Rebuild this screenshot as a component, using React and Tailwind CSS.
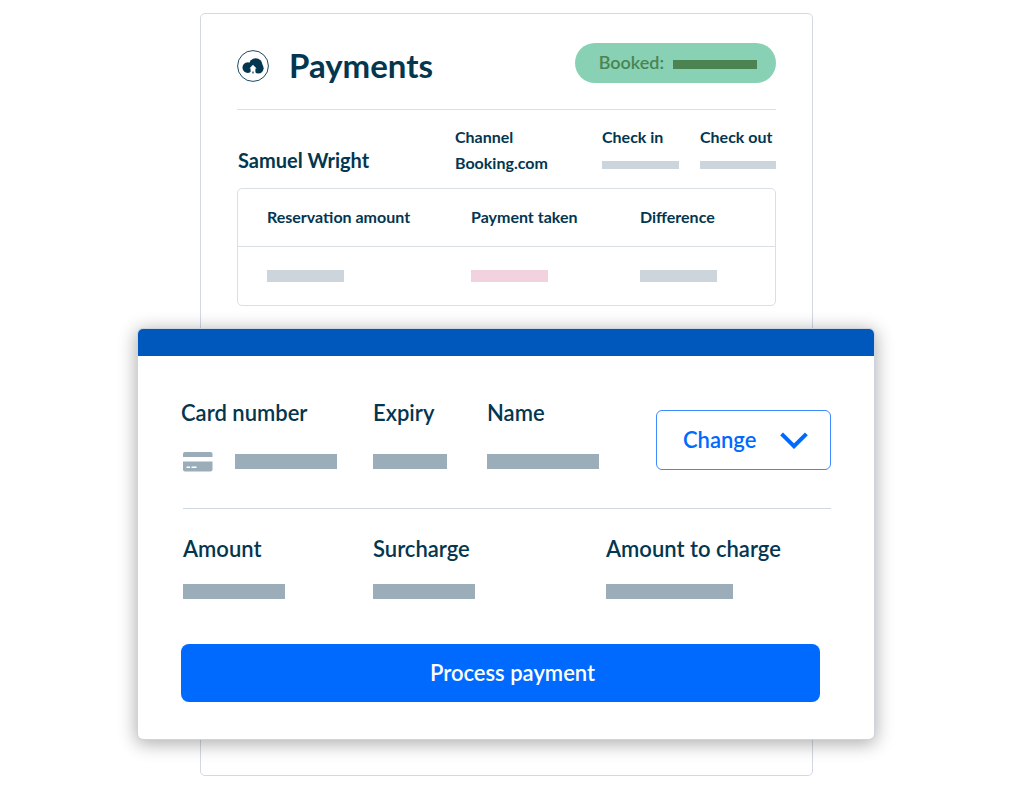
const Bar = ({ className }) => <span aria-hidden="true" className={`block ${className}`} />;

const detalle = [
  { label: 'Reservation amount', color: 'bg-[#ccd5db]' },
  { label: 'Payment taken', color: 'bg-[#f2d2de]' },
  { label: 'Difference', color: 'bg-[#ccd5db]' },
];

const tarjeta = [
  { label: 'Card number', width: 'w-[102px]', icon: true },
  { label: 'Expiry', width: 'w-[74px]' },
  { label: 'Name', width: 'w-[112px]' },
];

const cargos = [
  { label: 'Amount', width: 'w-[102px]' },
  { label: 'Surcharge', width: 'w-[102px]' },
  { label: 'Amount to charge', width: 'w-[127px]' },
];

const Logo = () => (
  <svg viewBox="0 0 32 32" className="size-8 shrink-0" aria-hidden="true">
    <circle cx="16" cy="16" r="15.4" fill="#fff" stroke="#03364f" strokeWidth="0.9" />
    <g fill="#03364f">
      <circle cx="10.8" cy="17.6" r="5.3" />
      <circle cx="18.7" cy="15" r="6.8" />
      <circle cx="21.4" cy="18.2" r="5.2" />
    </g>
    <path d="M16 14.8l3.6 3.8h-1.2V24h-4.8v-5.4h-1.2z" fill="#fff" />
    <path d="M15.4 21.6h1.2v1.8h-1.2z" fill="#03364f" />
  </svg>
);

const CardIcon = () => (
  <svg viewBox="0 0 30 20" className="w-[30px] h-5 shrink-0" aria-hidden="true">
    <path d="M2 0h25.500a2 2 0 0 1 2 2v3H0V2a2 2 0 0 1 2-2z" fill="#9aadb8" />
    <path d="M0 9.500h29.500V17.500a2 2 0 0 1-2 2H2a2 2 0 0 1-2-2z" fill="#9aadb8" />
    <path d="M3.500 15.200h3.500M8.500 15.200h5" stroke="#fff" strokeWidth="1.4" />
  </svg>
);

export default function App() {
  return (
    <main className="min-h-screen bg-white px-4 pt-[13px] pb-[18px] font-['Lato',sans-serif] text-[#03364f]">
      <div className="max-w-[736px] mx-auto pl-[62px] pr-[61px]">
        <section className="border border-[#d3d9e3] rounded-[5px] pb-9">
          <div className="px-9">
            <header className="h-24 pt-[29px] flex items-start justify-between border-b border-[#d9dfe7]">
              <div className="h-[46px] flex items-center gap-5">
                <Logo />
                <h1 className="pb-0.5 text-[33px] leading-10 font-bold">Payments</h1>
              </div>
              <div className="h-10 pl-6 pr-[19px] rounded-full bg-[#88d1b4] text-[#4b8352] flex items-center gap-[9px]">
                <span className="pb-0.5 text-lg font-semibold">Booked:</span>
                <Bar className="w-[84px] h-[9px] mt-0.5 bg-[#4b8352]" />
              </div>
            </header>

            <div className="pt-[14px] pb-2 grid grid-cols-[1fr_147px_98px_76px] text-base leading-[26px] font-bold">
              <h2 className="self-end pl-px text-xl leading-10 font-bold">Samuel Wright</h2>
              <div>
                <p>Channel</p>
                <p>Booking.com</p>
              </div>
              <div>
                <p>Check in</p>
                <div className="h-[30px] flex items-center"><Bar className="w-[77px] h-2 bg-[#ccd5db]" /></div>
              </div>
              <div>
                <p className="whitespace-nowrap">Check out</p>
                <div className="h-[30px] flex items-center"><Bar className="w-[77px] h-2 bg-[#ccd5db]" /></div>
              </div>
            </div>

            <div className="border border-[#d9dfe7] rounded-[5px]">
              <table className="w-full table-fixed">
                <colgroup>
                  <col className="w-[204px]" />
                  <col className="w-[169px]" />
                  <col />
                </colgroup>
                <thead>
                  <tr className="h-[57px] border-b border-[#d9dfe7]">
                    {detalle.map(d => (
                      <th key={d.label} className="pl-[29px] text-left text-base font-bold whitespace-nowrap">{d.label}</th>
                    ))}
                  </tr>
                </thead>
                <tbody>
                  <tr className="h-[59px]">
                    {detalle.map(d => (
                      <td key={d.label} className="pl-[29px]">
                        <Bar className={`w-[77px] h-3 ${d.color}`} />
                      </td>
                    ))}
                  </tr>
                </tbody>
              </table>
            </div>
          </div>

          {/* Panel de cobro, más ancho que la tarjeta */}
          <div className="relative mt-[23px] -ml-[63px] -mr-[62px] rounded-[5px] overflow-hidden bg-white shadow-[0_0_0_1px_#cdd4dc,0_3px_18px_2px_rgba(0,0,0,0.32)]">
            <div className="h-[27px] bg-[#0058bd]" />
            <div className="px-[43px] pt-[41px] pb-[37px] text-[22px] leading-8 font-semibold">
              <div className="grid grid-cols-[192px_114px_1fr_175px]">
                {tarjeta.map(t => (
                  <div key={t.label}>
                    <p>{t.label}</p>
                    <div className="mt-5 h-[25px] flex items-center">
                      {t.icon && <div className="pl-0.5 pr-[22px]"><CardIcon /></div>}
                      <Bar className={`h-[15px] bg-[#9aadb8] ${t.width}`} />
                    </div>
                  </div>
                ))}
                <button type="button" aria-haspopup="menu"
                  className="self-end mb-1 h-[60px] pl-[26px] pr-[22px] flex items-center justify-between border border-[#3d8bff] rounded-md text-[#006aff]">
                  Change
                  <svg viewBox="0 0 28 18" className="w-7 h-[18px]" fill="none" stroke="currentColor" strokeWidth="4" aria-hidden="true">
                    <path d="M1.6 2.8L14 15.2L26.4 2.8" />
                  </svg>
                </button>
              </div>

              <hr className="mt-[34px] ml-0.5 border-[#ced6e0]" />

              <div className="mt-6 pl-0.5 grid grid-cols-[190px_233px_1fr]">
                {cargos.map(c => (
                  <div key={c.label}>
                    <p>{c.label}</p>
                    <Bar className={`mt-[19px] h-[15px] bg-[#9aadb8] ${c.width}`} />
                  </div>
                ))}
              </div>

              <div className="mt-[45px] pr-[11px]">
                <button type="button" className="w-full h-[58px] pl-6 rounded-lg bg-[#006aff] text-white">
                  Process payment
                </button>
              </div>
            </div>
          </div>
        </section>
      </div>
    </main>
  );
}
